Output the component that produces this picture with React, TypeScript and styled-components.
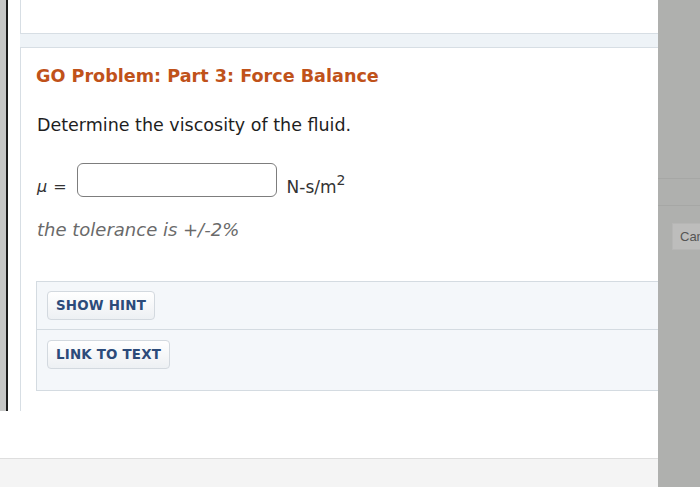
import React from 'react';
import styled, { createGlobalStyle } from 'styled-components';

const GlobalStyle = createGlobalStyle`
  html, body {
    margin: 0;
    padding: 0;
    background: #ffffff;
  }
  body {
    font-family: "DejaVu Sans", Verdana, sans-serif;
    color: #222;
  }
`;

const Page = styled.div`
  display: flex;
  width: 700px;
  height: 487px;
  overflow: hidden;
`;

const Main = styled.div`
  flex: 0 0 658px;
  display: flex;
  flex-direction: column;
`;

const Frame = styled.div`
  height: 411px;
  display: flex;
  overflow: hidden;
`;

const Rail = styled.div`
  width: 6px;
  background: #c6c7c6;
  border-right: 2px solid #1c1c1c;
`;

const Gutter = styled.div`
  width: 12px;
  background: #fff;
`;

const Stack = styled.div`
  flex: 1;
  display: flex;
  flex-direction: column;
  gap: 13px;
  background: #eef3f7;
`;

const Card = styled.section<{ $stub?: boolean }>`
  background: #fff;
  border: 1px solid #d7dee4;
  border-right: none;
  ${(p) =>
    p.$stub
      ? 'height: 33px; border-top: none;'
      : 'flex: 1; border-bottom: none; padding: 16px 0 0 15px;'}
`;

const Title = styled.h2`
  margin: 0;
  font-size: 17.6px;
  line-height: 24px;
  font-weight: bold;
  color: #c0521a;
`;

const Prompt = styled.p`
  margin: 25px 0 0 1px;
  font-size: 17.5px;
  line-height: 24px;
  color: #1e1e1e;
`;

const AnswerRow = styled.div`
  margin-top: 26px;
  display: flex;
  align-items: flex-end;
  gap: 10px;
`;

const Label = styled.span`
  font-size: 16px;
  line-height: 20px;
  color: #333;
  padding-left: 1px;
  & > i {
    font-style: italic;
    margin-right: 6px;
  }
`;

const Field = styled.input`
  box-sizing: border-box;
  width: 200px;
  height: 34px;
  border: 1px solid #7d7d7d;
  border-radius: 6px;
  background: #fff;
`;

const Unit = styled.span`
  font-size: 17px;
  line-height: 20px;
  color: #333;
  & > sup {
    font-size: 14px;
    line-height: 0;
    vertical-align: 8px;
  }
`;

const Tolerance = styled.p`
  margin: 21px 0 0 1px;
  font-size: 18px;
  line-height: 24px;
  font-style: italic;
  color: #6a6a6a;
`;

const HintBox = styled.div`
  margin-top: 39px;
  background: #f4f7fa;
  border: 1px solid #d4dbe1;
  border-right: none;
`;

const HintRow = styled.div<{ $last?: boolean }>`
  padding: ${(p) => (p.$last ? '10px 10px 21px' : '9px 10px')};
  & + & {
    border-top: 1px solid #d4dbe1;
  }
`;

const HintButton = styled.button`
  box-sizing: border-box;
  height: 29px;
  padding: 0 8px;
  border: 1px solid #d3d9df;
  border-radius: 4px;
  background: linear-gradient(#ffffff, #edf0f3);
  font-family: "DejaVu Sans", Verdana, sans-serif;
  font-size: 13.4px;
  font-weight: bold;
  color: #2c4b7a;
  letter-spacing: 0.2px;
`;

const Footer = styled.div`
  flex: 1;
  display: flex;
  flex-direction: column;
  justify-content: flex-end;
`;

const FooterStrip = styled.div`
  height: 28px;
  background: #f4f4f4;
  border-top: 1px solid #dedede;
`;

const SidePanel = styled.aside`
  flex: 1;
  min-width: 0;
  background: #afb0ae;
  display: flex;
  flex-direction: column;
`;

const SideRow = styled.div`
  margin-top: 178px;
  height: 26px;
  border-top: 1px solid #a6a7a5;
  border-bottom: 1px solid #a6a7a5;
`;

const SideButton = styled.div`
  margin: 17px 0 0 14px;
  height: 25px;
  padding-left: 7px;
  background: #bdbdbc;
  border: 1px solid #b6b6b5;
  border-right: none;
  font-family: "Liberation Sans", Arial, sans-serif;
  font-size: 13px;
  line-height: 25px;
  color: #555;
  white-space: nowrap;
  overflow: hidden;
`;

export default function App() {
  return (
    <>
      <GlobalStyle />
      <Page>
        <Main>
          <Frame>
            <Rail />
            <Gutter />
            <Stack>
              <Card $stub />
              <Card>
                <Title>GO Problem: Part 3: Force Balance</Title>
                <Prompt>Determine the viscosity of the fluid.</Prompt>
                <AnswerRow>
                  <Label>
                    <i>μ</i>=
                  </Label>
                  <Field type="text" aria-label="viscosity" />
                  <Unit>
                    N-s/m<sup>2</sup>
                  </Unit>
                </AnswerRow>
                <Tolerance>the tolerance is +/-2%</Tolerance>
                <HintBox>
                  <HintRow>
                    <HintButton>SHOW HINT</HintButton>
                  </HintRow>
                  <HintRow $last>
                    <HintButton>LINK TO TEXT</HintButton>
                  </HintRow>
                </HintBox>
              </Card>
            </Stack>
          </Frame>
          <Footer>
            <FooterStrip />
          </Footer>
        </Main>
        <SidePanel>
          <SideRow />
          <SideButton>Cancel</SideButton>
        </SidePanel>
      </Page>
    </>
  );
}
